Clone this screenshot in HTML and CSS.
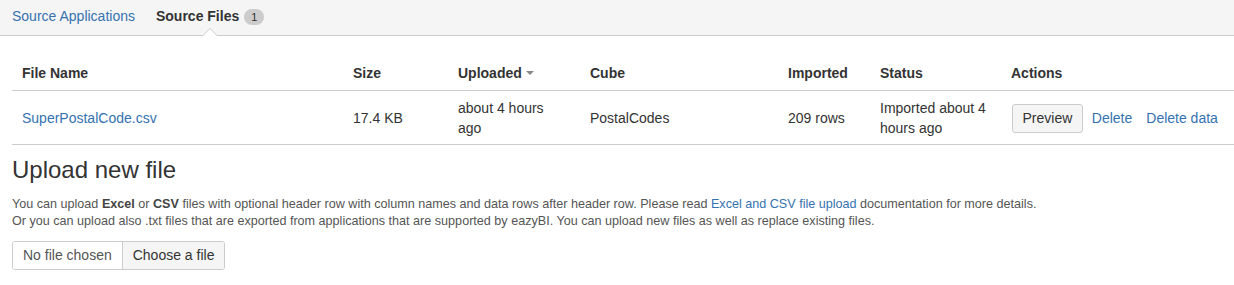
FILE: index.html
```html
<!DOCTYPE html>
<html>
<head>
<meta charset="utf-8">
<link rel="stylesheet" href="styles.css">
</head>
<body>
<nav class="tabs">
  <a class="tab" href="#">Source Applications</a>
  <span class="tab active">Source Files <span class="badge">1</span></span>
</nav>
<main class="content">
  <table class="files">
    <colgroup>
      <col class="c-name"><col class="c-size"><col class="c-up"><col class="c-cube"><col class="c-imp"><col class="c-status"><col>
    </colgroup>
    <thead>
      <tr>
        <th>File Name</th>
        <th>Size</th>
        <th>Uploaded <span class="caret"></span></th>
        <th>Cube</th>
        <th>Imported</th>
        <th>Status</th>
        <th>Actions</th>
      </tr>
    </thead>
    <tbody>
      <tr>
        <td><a href="#">SuperPostalCode.csv</a></td>
        <td>17.4 KB</td>
        <td>about 4 hours<br>ago</td>
        <td>PostalCodes</td>
        <td>209 rows</td>
        <td>Imported about 4<br>hours ago</td>
        <td>
          <div class="actions">
            <button class="btn">Preview</button>
            <a class="act-delete" href="#">Delete</a>
            <a class="act-data" href="#">Delete data</a>
          </div>
        </td>
      </tr>
    </tbody>
  </table>
  <h2 class="title">Upload new file</h2>
  <p class="info">You can upload <b>Excel</b> or <b>CSV</b> files with optional header row with column names and data rows after header row. Please read <a href="#">Excel and CSV file upload</a> documentation for more details.<br>Or you can upload also .txt files that are exported from applications that are supported by eazyBI. You can upload new files as well as replace existing files.</p>
  <div class="file-input">
    <span class="file-name">No file chosen</span>
    <span class="file-btn">Choose a file</span>
  </div>
</main>
</body>
</html>
```

FILE: styles.css
```css
html, body {
  margin: 0;
  padding: 0;
  background: #fff;
}
body {
  font-family: "Liberation Sans", Arial, sans-serif;
  font-size: 14px;
  color: #333;
}
a {
  color: #3572b0;
  text-decoration: none;
}
.tabs {
  display: flex;
  gap: 20px;
  height: 35px;
  padding: 0 12px;
  background: #f5f5f5;
  border-bottom: 1px solid #ccc;
  box-sizing: content-box;
}
.tab {
  position: relative;
  display: flex;
  align-items: flex-start;
  padding-top: 6px;
  line-height: 20px;
}
.tab.active {
  font-weight: bold;
  color: #333;
  margin-left: 1px;
}
.tab.active::before,
.tab.active::after {
  content: "";
  position: absolute;
  left: 50%;
  width: 0;
  height: 0;
  border-style: solid;
}
.tab.active::before {
  bottom: -1px;
  margin-left: -8px;
  border-width: 0 8px 8px 8px;
  border-color: transparent transparent #ccc transparent;
}
.tab.active::after {
  bottom: -1px;
  margin-left: -7px;
  border-width: 0 7px 7px 7px;
  border-color: transparent transparent #fff transparent;
}
.badge {
  display: inline-block;
  margin-left: 5px;
  margin-top: 3px;
  height: 16px;
  line-height: 16px;
  padding: 0 7px;
  border-radius: 8px;
  background: #ccc;
  color: #333;
  font-size: 11px;
  font-weight: normal;
}
.content {
  padding-left: 12px;
}
.files {
  width: 100%;
  margin-top: 19px;
  border-collapse: collapse;
  table-layout: fixed;
}
.c-name { width: 331px; }
.c-size { width: 105px; }
.c-up { width: 132px; }
.c-cube { width: 198px; }
.c-imp { width: 92px; }
.c-status { width: 131px; }
.files th {
  text-align: left;
  font-weight: bold;
  padding: 8px 10px 7px;
  line-height: 20px;
  border-bottom: 1px solid #ccc;
}
.files td {
  padding: 7px 10px 6px;
  line-height: 20px;
  vertical-align: middle;
  border-bottom: 1px solid #ccc;
}
.caret {
  display: inline-block;
  width: 0;
  height: 0;
  margin-left: 0;
  vertical-align: 3px;
  border-left: 4px solid transparent;
  border-right: 4px solid transparent;
  border-top: 4px solid #888;
}
.actions {
  display: flex;
  align-items: center;
}
.btn {
  font-family: inherit;
  font-size: 14px;
  color: #333;
  height: 29px;
  padding: 0 9.5px;
  margin-left: 1px;
  background: #f5f5f5;
  border: 1px solid #ccc;
  border-radius: 3px;
}
.act-delete { margin-left: 9px; }
.act-data { margin-left: 14px; }
.title {
  margin: 11px 0 0;
  font-size: 24px;
  font-weight: normal;
  line-height: 28px;
  color: #333;
}
.info {
  margin: 12px 0 0;
  font-size: 12.6px;
  line-height: 17px;
  color: #555;
}
.info b {
  color: #444;
}
.file-input {
  display: inline-flex;
  margin-top: 11px;
  border: 1px solid #ccc;
  border-radius: 3px;
  line-height: 19px;
  font-size: 14px;
  overflow: hidden;
}
.file-name {
  padding: 4px 10px;
  color: #555;
  background: #fff;
}
.file-btn {
  padding: 4px 10px;
  color: #333;
  background: #f5f5f5;
  border-left: 1px solid #ccc;
}
```
